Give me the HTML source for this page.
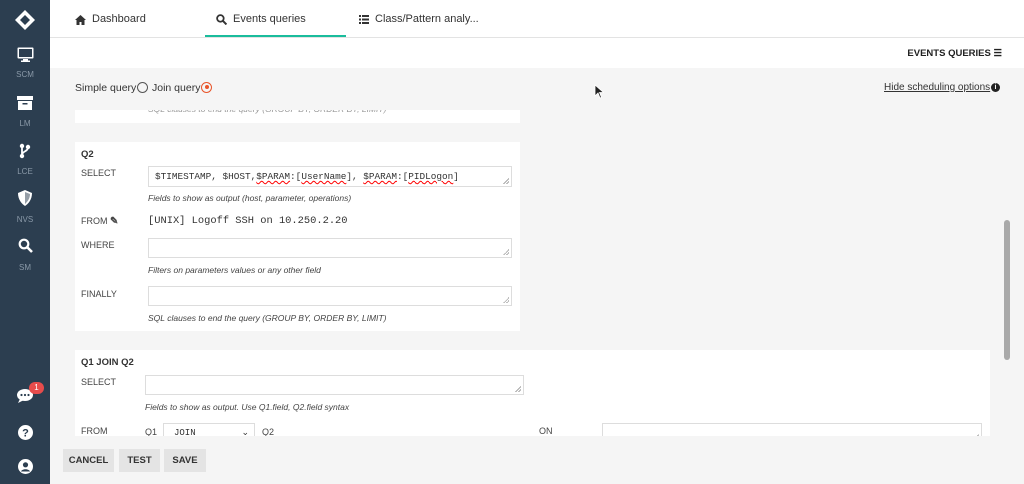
<!DOCTYPE html>
<html><head><style>
*{box-sizing:border-box;margin:0;padding:0}
body{width:1024px;height:484px;overflow:hidden;font-family:"Liberation Sans",sans-serif;background:#f5f5f5;position:relative;color:#333}
.a{position:absolute}
.sb{left:0;top:0;width:50px;height:484px;background:#2c3e50}
.sb .l{position:absolute;width:50px;text-align:center;font-size:8px;color:#8a99a8}
.hdr{left:50px;top:0;width:974px;height:68px;background:#fff}
.tab{font-size:11px;color:#333;top:13px;white-space:nowrap}
.card{background:#fff}
.lbl{font-size:9px;color:#444}
.ta{border:1px solid #ddd;background:#fff;height:20px}
.ta:after{content:"";position:absolute;right:2px;bottom:2px;width:6px;height:6px;background:linear-gradient(135deg,transparent 50%,#aaa 50%,#aaa 60%,transparent 60%,transparent 75%,#aaa 75%,#aaa 85%,transparent 85%)}
.hint{font-size:8.5px;font-style:italic;color:#444;white-space:nowrap}
.mono{font-family:"Liberation Mono",monospace;font-size:10.4px;color:#333}
.btn{background:#e4e4e4;font-size:9.5px;font-weight:bold;color:#333;height:23px;line-height:23px;text-align:center;top:449px}
u.s{text-decoration:underline wavy red;text-decoration-thickness:1px}
.rad{display:inline-block;vertical-align:-2px;width:11px;height:11px;border-radius:50%;margin-left:1px}
</style></head><body>
<div class="a sb">
<svg class="a" style="left:14px;top:9px" width="22" height="22" viewBox="0 0 22 22"><path d="M11 1L21 11 11 21 1 11Z" fill="#fff"/><path d="M11 6L16 11 11 16 6 11Z" fill="#2c3e50"/></svg>
<svg class="a" style="left:17px;top:47px" width="17" height="15" viewBox="0 0 17 15"><rect x="0.5" y="0.5" width="16" height="11" rx="1" fill="#fff"/><rect x="2" y="2" width="13" height="8" fill="#2c3e50"/><rect x="6" y="12" width="5" height="2" fill="#fff"/><rect x="4" y="13.5" width="9" height="1.5" fill="#fff"/></svg>
<div class="l" style="top:70px">SCM</div>
<svg class="a" style="left:17px;top:96px" width="16" height="14" viewBox="0 0 16 14"><rect x="0" y="0" width="16" height="4" fill="#fff"/><rect x="1" y="5" width="14" height="9" fill="#fff"/><rect x="5.5" y="7" width="5" height="1.5" fill="#2c3e50"/></svg>
<div class="l" style="top:119px">LM</div>
<svg class="a" style="left:19px;top:143px" width="12" height="16" viewBox="0 0 12 16"><circle cx="3" cy="3" r="2.2" fill="#fff"/><circle cx="3" cy="13" r="2.2" fill="#fff"/><circle cx="9" cy="4" r="2.2" fill="#fff"/><path d="M3 3V13M9 4C9 9 3 8 3 12" stroke="#fff" stroke-width="1.8" fill="none"/></svg>
<div class="l" style="top:167px">LCE</div>
<svg class="a" style="left:18px;top:190px" width="14" height="16" viewBox="0 0 14 16"><path d="M7 0L14 3C14 10 10 14 7 16 4 14 0 10 0 3Z" fill="#fff"/><path d="M7 2V14C9 12 12 9 12 4Z" fill="#2c3e50" opacity=".5"/></svg>
<div class="l" style="top:215px">NVS</div>
<svg class="a" style="left:18px;top:238px" width="15" height="15" viewBox="0 0 15 15"><circle cx="6" cy="6" r="4.3" stroke="#fff" stroke-width="2.2" fill="none"/><path d="M9 9L14 14" stroke="#fff" stroke-width="2.6"/></svg>
<div class="l" style="top:263px">SM</div>
<svg class="a" style="left:17px;top:389px" width="16" height="14" viewBox="0 0 16 14"><ellipse cx="8" cy="6" rx="8" ry="6" fill="#fff"/><path d="M3 10L1 14 7 11Z" fill="#fff"/><circle cx="4.5" cy="6" r="1.1" fill="#2c3e50"/><circle cx="8" cy="6" r="1.1" fill="#2c3e50"/><circle cx="11.5" cy="6" r="1.1" fill="#2c3e50"/></svg>
<div class="a" style="left:29px;top:382px;width:15px;height:12px;border-radius:6px;background:#e74c4c;color:#fff;font-size:8px;text-align:center;line-height:12px">1</div>
<svg class="a" style="left:18px;top:425px" width="15" height="15" viewBox="0 0 15 15"><circle cx="7.5" cy="7.5" r="7.5" fill="#fff"/><text x="7.5" y="11.5" font-size="11" font-weight="bold" text-anchor="middle" fill="#2c3e50" font-family="Liberation Sans">?</text></svg>
<svg class="a" style="left:18px;top:459px" width="15" height="15" viewBox="0 0 15 15"><circle cx="7.5" cy="7.5" r="7.5" fill="#fff"/><circle cx="7.5" cy="5.8" r="2.6" fill="#2c3e50"/><path d="M3 12.5C4 9.5 11 9.5 12 12.5" fill="#2c3e50"/></svg>
</div>
<div class="a hdr">
<div style="position:absolute;left:0;top:37px;width:974px;height:1px;background:#e3e3e3"></div>
<svg class="a" style="left:25px;top:15px" width="11" height="10" viewBox="0 0 11 10"><path d="M5.5 0L11 5H9.5V10H6.5V7H4.5V10H1.5V5H0Z" fill="#333"/></svg>
<div class="a tab" style="left:42px">Dashboard</div>
<svg class="a" style="left:166px;top:14px" width="11" height="11" viewBox="0 0 10 10"><circle cx="4" cy="4" r="3" stroke="#333" stroke-width="1.6" fill="none"/><path d="M6 6L9.5 9.5" stroke="#333" stroke-width="1.8"/></svg>
<div class="a tab" style="left:183px">Events queries</div>
<div class="a" style="left:155px;top:35px;width:141px;height:2px;background:#1abc9c"></div>
<svg class="a" style="left:309px;top:15px" width="10" height="9" viewBox="0 0 10 9"><rect x="0" y="0" width="2" height="2" fill="#333"/><rect x="3" y="0" width="7" height="2" fill="#333"/><rect x="0" y="3.5" width="2" height="2" fill="#333"/><rect x="3" y="3.5" width="7" height="2" fill="#333"/><rect x="0" y="7" width="2" height="2" fill="#333"/><rect x="3" y="7" width="7" height="2" fill="#333"/></svg>
<div class="a tab" style="left:325px">Class/Pattern analy...</div>
<div class="a" style="right:22px;top:48px;font-size:9.5px;font-weight:bold;color:#222">EVENTS QUERIES &#9776;</div>
</div>
<div class="a" style="left:75px;top:82px;font-size:10.5px;color:#333;white-space:nowrap">Simple query<span class="rad" style="border:1.3px solid #555"></span></div>
<div class="a" style="left:152px;top:82px;font-size:10.5px;color:#333;white-space:nowrap">Join query<span class="rad" style="border:1.3px solid #e8552a;position:relative"><span style="position:absolute;left:2.2px;top:2.2px;width:4px;height:4px;border-radius:50%;background:#e8552a"></span></span></div>
<div class="a" style="left:884px;top:82px;font-size:10px;text-decoration:underline;color:#333">Hide scheduling options</div>
<div class="a" style="left:991px;top:83px;width:9px;height:9px;border-radius:50%;background:#222;color:#fff;font-size:7px;text-align:center;line-height:9px;font-weight:bold">i</div>
<svg class="a" style="left:594px;top:84px" width="10" height="15" viewBox="0 0 10 15"><path d="M1 1V12L4 9 6 14 7.5 13.4 5.5 8.5H9.5Z" fill="#222" stroke="#fff" stroke-width=".8"/></svg>

<div class="a card" style="left:75px;top:110px;width:445px;height:13px;overflow:hidden"><div class="hint" style="position:absolute;left:73px;top:-6px;color:#999">SQL clauses to end the query (GROUP BY, ORDER BY, LIMIT)</div></div>

<div class="a card" style="left:75px;top:142px;width:445px;height:189px">
<div class="a" style="left:6px;top:7px;font-size:9.5px;font-weight:bold">Q2</div>
<div class="a lbl" style="left:6px;top:26px">SELECT</div>
<div class="a ta" style="left:73px;top:24px;width:364px;height:21px"><div class="mono" style="padding:4px 6px;white-space:nowrap;font-size:9.4px">$TIMESTAMP, $HOST,<u class="s">$PARAM</u>:[<u class="s">UserName</u>], <u class="s">$PARAM</u>:[<u class="s">PIDLogon</u>]</div></div>
<div class="a hint" style="left:73px;top:51px">Fields to show as output (host, parameter, operations)</div>
<div class="a lbl" style="left:6px;top:74px">FROM <b style="font-size:10px">&#9998;</b></div>
<div class="a mono" style="left:73px;top:73px">[UNIX] Logoff SSH on 10.250.2.20</div>
<div class="a lbl" style="left:6px;top:98px">WHERE</div>
<div class="a ta" style="left:73px;top:96px;width:364px"></div>
<div class="a hint" style="left:73px;top:123px">Filters on parameters values or any other field</div>
<div class="a lbl" style="left:6px;top:147px">FINALLY</div>
<div class="a ta" style="left:73px;top:144px;width:364px"></div>
<div class="a hint" style="left:73px;top:171px">SQL clauses to end the query (GROUP BY, ORDER BY, LIMIT)</div>
</div>

<div class="a card" style="left:75px;top:350px;width:915px;height:86px">
<div class="a" style="left:6px;top:7px;font-size:9.5px;font-weight:bold">Q1 JOIN Q2</div>
<div class="a lbl" style="left:6px;top:27px">SELECT</div>
<div class="a ta" style="left:70px;top:25px;width:379px"></div>
<div class="a hint" style="left:70px;top:52px">Fields to show as output. Use Q1.field, Q2.field syntax</div>
<div class="a lbl" style="left:6px;top:76px">FROM</div>
<div class="a lbl" style="left:70px;top:77px">Q1</div>
<div class="a" style="left:88px;top:73px;width:92px;height:20px;border:1px solid #ddd"><span class="mono" style="position:absolute;left:10px;top:4px;font-size:9px">JOIN</span><span style="position:absolute;right:5px;top:3px;font-size:9px">&#8964;</span></div>
<div class="a lbl" style="left:187px;top:77px">Q2</div>
<div class="a lbl" style="left:464px;top:76px">ON</div>
<div class="a ta" style="left:527px;top:73px;width:380px"></div>
</div>

<div class="a" style="left:50px;top:436px;width:974px;height:48px;background:#f5f5f5"></div>
<div class="a btn" style="left:63px;width:51px">CANCEL</div>
<div class="a btn" style="left:119px;width:41px">TEST</div>
<div class="a btn" style="left:164px;width:42px">SAVE</div>
<div class="a" style="left:1004px;top:220px;width:6px;height:140px;background:#a9a9a9;border-radius:3px"></div>
</body></html>
